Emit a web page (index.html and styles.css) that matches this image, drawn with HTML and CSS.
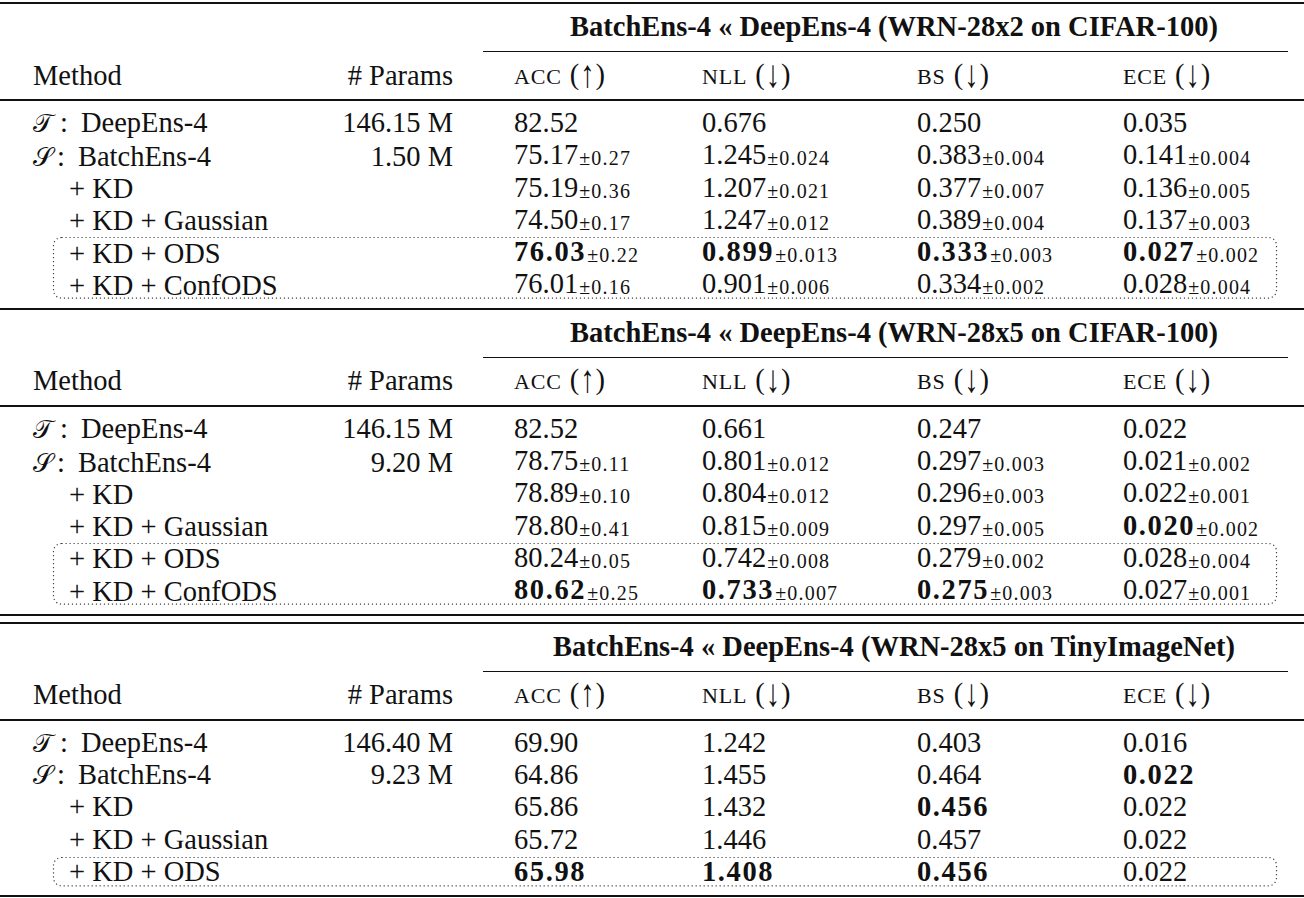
FILE: index.html
```html
<!DOCTYPE html>
<html lang="en">
<head>
<meta charset="utf-8">
<title>BatchEns vs DeepEns results</title>
<link rel="stylesheet" href="styles.css">
</head>
<body>
<div class="table">
  <div class="rule heavy"></div>

  <section class="block">
    <div class="group-head">BatchEns-4 « DeepEns-4 (WRN-28x2 on CIFAR-100)</div>
    <div class="row thead">
      <div class="m">Method</div><div class="p"># Params</div>
      <div class="v acc"><span class="sc">ACC</span> <span class="ar">(<span class="arw">↑</span>)</span></div>
      <div class="v"><span class="sc">NLL</span> <span class="ar">(<span class="arw">↓</span>)</span></div>
      <div class="v"><span class="sc">BS</span> <span class="ar">(<span class="arw">↓</span>)</span></div>
      <div class="v"><span class="sc">ECE</span> <span class="ar">(<span class="arw">↓</span>)</span></div>
    </div>
    <div class="rule mid"></div>
    <div class="tbody">
      <div class="row"><div class="m"><span class="cal ct">𝒯</span><span class="colon">:</span>DeepEns-4</div><div class="p">146.15 M</div><div class="v acc">82.52</div><div class="v">0.676</div><div class="v">0.250</div><div class="v">0.035</div></div>
      <div class="row"><div class="m"><span class="cal cs">𝒮</span><span class="colon">:</span>BatchEns-4</div><div class="p">1.50 M</div><div class="v acc">75.17<span class="pm">±0.27</span></div><div class="v">1.245<span class="pm">±0.024</span></div><div class="v">0.383<span class="pm">±0.004</span></div><div class="v">0.141<span class="pm">±0.004</span></div></div>
      <div class="row"><div class="m sub">+ KD</div><div class="p"></div><div class="v acc">75.19<span class="pm">±0.36</span></div><div class="v">1.207<span class="pm">±0.021</span></div><div class="v">0.377<span class="pm">±0.007</span></div><div class="v">0.136<span class="pm">±0.005</span></div></div>
      <div class="row"><div class="m sub">+ KD + Gaussian</div><div class="p"></div><div class="v acc">74.50<span class="pm">±0.17</span></div><div class="v">1.247<span class="pm">±0.012</span></div><div class="v">0.389<span class="pm">±0.004</span></div><div class="v">0.137<span class="pm">±0.003</span></div></div>
      <div class="hl">
        <svg class="box" aria-hidden="true"><rect></rect></svg>
        <div class="row"><div class="m sub">+ KD + ODS</div><div class="p"></div><div class="v acc"><b>76.03</b><span class="pm">±0.22</span></div><div class="v"><b>0.899</b><span class="pm">±0.013</span></div><div class="v"><b>0.333</b><span class="pm">±0.003</span></div><div class="v"><b>0.027</b><span class="pm">±0.002</span></div></div>
        <div class="row"><div class="m sub">+ KD + ConfODS</div><div class="p"></div><div class="v acc">76.01<span class="pm">±0.16</span></div><div class="v">0.901<span class="pm">±0.006</span></div><div class="v">0.334<span class="pm">±0.002</span></div><div class="v">0.028<span class="pm">±0.004</span></div></div>
      </div>
    </div>
  </section>

  <div class="rule heavy"></div>

  <section class="block">
    <div class="group-head">BatchEns-4 « DeepEns-4 (WRN-28x5 on CIFAR-100)</div>
    <div class="row thead">
      <div class="m">Method</div><div class="p"># Params</div>
      <div class="v acc"><span class="sc">ACC</span> <span class="ar">(<span class="arw">↑</span>)</span></div>
      <div class="v"><span class="sc">NLL</span> <span class="ar">(<span class="arw">↓</span>)</span></div>
      <div class="v"><span class="sc">BS</span> <span class="ar">(<span class="arw">↓</span>)</span></div>
      <div class="v"><span class="sc">ECE</span> <span class="ar">(<span class="arw">↓</span>)</span></div>
    </div>
    <div class="rule mid"></div>
    <div class="tbody">
      <div class="row"><div class="m"><span class="cal ct">𝒯</span><span class="colon">:</span>DeepEns-4</div><div class="p">146.15 M</div><div class="v acc">82.52</div><div class="v">0.661</div><div class="v">0.247</div><div class="v">0.022</div></div>
      <div class="row"><div class="m"><span class="cal cs">𝒮</span><span class="colon">:</span>BatchEns-4</div><div class="p">9.20 M</div><div class="v acc">78.75<span class="pm">±0.11</span></div><div class="v">0.801<span class="pm">±0.012</span></div><div class="v">0.297<span class="pm">±0.003</span></div><div class="v">0.021<span class="pm">±0.002</span></div></div>
      <div class="row"><div class="m sub">+ KD</div><div class="p"></div><div class="v acc">78.89<span class="pm">±0.10</span></div><div class="v">0.804<span class="pm">±0.012</span></div><div class="v">0.296<span class="pm">±0.003</span></div><div class="v">0.022<span class="pm">±0.001</span></div></div>
      <div class="row"><div class="m sub">+ KD + Gaussian</div><div class="p"></div><div class="v acc">78.80<span class="pm">±0.41</span></div><div class="v">0.815<span class="pm">±0.009</span></div><div class="v">0.297<span class="pm">±0.005</span></div><div class="v"><b>0.020</b><span class="pm">±0.002</span></div></div>
      <div class="hl">
        <svg class="box" aria-hidden="true"><rect></rect></svg>
        <div class="row"><div class="m sub">+ KD + ODS</div><div class="p"></div><div class="v acc">80.24<span class="pm">±0.05</span></div><div class="v">0.742<span class="pm">±0.008</span></div><div class="v">0.279<span class="pm">±0.002</span></div><div class="v">0.028<span class="pm">±0.004</span></div></div>
        <div class="row"><div class="m sub">+ KD + ConfODS</div><div class="p"></div><div class="v acc"><b>80.62</b><span class="pm">±0.25</span></div><div class="v"><b>0.733</b><span class="pm">±0.007</span></div><div class="v"><b>0.275</b><span class="pm">±0.003</span></div><div class="v">0.027<span class="pm">±0.001</span></div></div>
      </div>
    </div>
  </section>

  <div class="rule double"></div>

  <section class="block">
    <div class="group-head">BatchEns-4 « DeepEns-4 (WRN-28x5 on TinyImageNet)</div>
    <div class="row thead">
      <div class="m">Method</div><div class="p"># Params</div>
      <div class="v acc"><span class="sc">ACC</span> <span class="ar">(<span class="arw">↑</span>)</span></div>
      <div class="v"><span class="sc">NLL</span> <span class="ar">(<span class="arw">↓</span>)</span></div>
      <div class="v"><span class="sc">BS</span> <span class="ar">(<span class="arw">↓</span>)</span></div>
      <div class="v"><span class="sc">ECE</span> <span class="ar">(<span class="arw">↓</span>)</span></div>
    </div>
    <div class="rule mid"></div>
    <div class="tbody">
      <div class="row"><div class="m"><span class="cal ct">𝒯</span><span class="colon">:</span>DeepEns-4</div><div class="p">146.40 M</div><div class="v acc">69.90</div><div class="v">1.242</div><div class="v">0.403</div><div class="v">0.016</div></div>
      <div class="row"><div class="m"><span class="cal cs">𝒮</span><span class="colon">:</span>BatchEns-4</div><div class="p">9.23 M</div><div class="v acc">64.86</div><div class="v">1.455</div><div class="v">0.464</div><div class="v"><b>0.022</b></div></div>
      <div class="row"><div class="m sub">+ KD</div><div class="p"></div><div class="v acc">65.86</div><div class="v">1.432</div><div class="v"><b>0.456</b></div><div class="v">0.022</div></div>
      <div class="row"><div class="m sub">+ KD + Gaussian</div><div class="p"></div><div class="v acc">65.72</div><div class="v">1.446</div><div class="v">0.457</div><div class="v">0.022</div></div>
      <div class="hl">
        <svg class="box" aria-hidden="true"><rect></rect></svg>
        <div class="row"><div class="m sub">+ KD + ODS</div><div class="p"></div><div class="v acc"><b>65.98</b></div><div class="v"><b>1.408</b></div><div class="v"><b>0.456</b></div><div class="v">0.022</div></div>
      </div>
    </div>
  </section>

  <div class="rule heavy"></div>
</div>
</body>
</html>
```

FILE: styles.css
```css
html, body {
  margin: 0;
  padding: 0;
  background: #fff;
}

body {
  width: 1304px;
  color: #111;
  font-family: "Liberation Serif", "Times New Roman", serif;
  font-size: 28.5px;
}

.table {
  padding-top: 2px;
}

.rule {
  background: #111;
}

.rule.heavy {
  height: 2px;
}

.rule.mid {
  height: 2px;
}

.rule.double {
  height: 10px;
  background: none;
  border-top: 2px solid #111;
  border-bottom: 2px solid #111;
  box-sizing: border-box;
}

.group-head {
  box-sizing: border-box;
  margin-left: 483px;
  width: 805px;
  height: 48px;
  border-bottom: 1px solid #111;
  padding-left: 17px;
  display: flex;
  align-items: center;
  justify-content: center;
  font-weight: 700;
  white-space: nowrap;
  line-height: 1;
}

.row {
  display: grid;
  grid-template-columns: 267px 153px 249px 215px 206px 1fr;
  padding-left: 33px;
  height: 32.3px;
  align-items: center;
  white-space: nowrap;
  line-height: 32px;
}

.row.thead {
  height: 47px;
}

.p {
  text-align: right;
}

.v.acc {
  padding-left: 61px;
}

.sub {
  padding-left: 36px;
}

.tbody {
  padding: 6px 0 7px;
}

.sc {
  font-size: 22px;
  letter-spacing: 0.8px;
}

.ar {
  margin-left: 1px;
}

.arw {
  display: inline-block;
  transform: scaleY(1.35);
  margin: 0 1px;
}

.cal {
  display: inline-block;
  font-family: "DejaVu Serif", "DejaVu Sans", "Noto Sans", serif;
  font-style: normal;
  font-size: 26px;
}

.cal.ct {
  width: 27px;
}

.cal.cs {
  width: 24px;
}

.colon {
  display: inline-block;
  margin-right: 13px;
}

b {
  font-weight: 700;
  letter-spacing: 1.6px;
}

.pm {
  font-size: 20px;
  letter-spacing: 1.2px;
  vertical-align: -1px;
  margin-left: 1px;
}

.hl {
  position: relative;
}

.box {
  position: absolute;
  left: 53px;
  right: 27px;
  top: 1px;
  bottom: 2px;
  width: calc(100% - 80px);
  height: calc(100% - 3px);
  overflow: visible;
}

.box rect {
  x: 0.5px;
  y: 0.5px;
  width: calc(100% - 1px);
  height: calc(100% - 1px);
  rx: 8px;
  ry: 8px;
  fill: none;
  stroke: #444;
  stroke-width: 1.2;
  stroke-dasharray: 1.2 2.8;
}
```
